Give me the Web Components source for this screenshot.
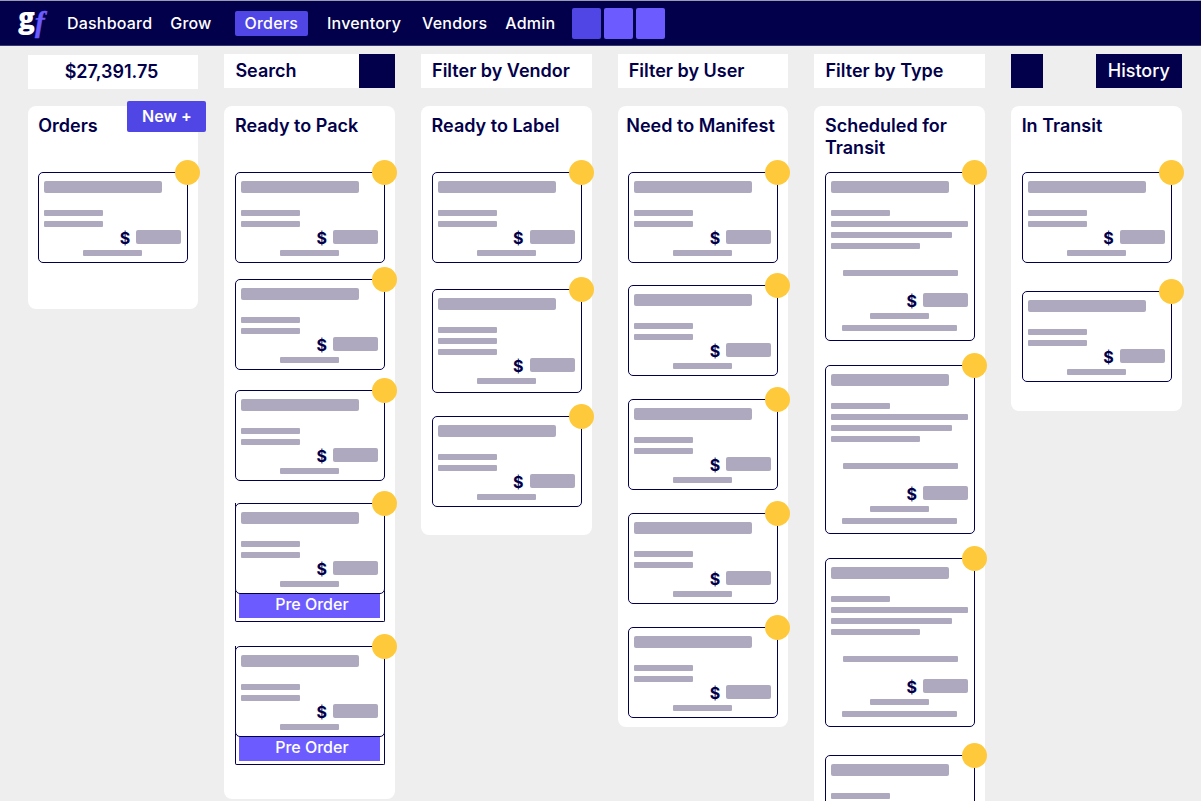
<!DOCTYPE html>
<html>
<head>
<meta charset="utf-8">
<title>Orders</title>
<style>
    html, body {
        margin: 0;
        height: 801px;
        overflow: hidden;
        background: #eeeeee;
        font-family: Inter, 'Liberation Sans', sans-serif;
        color: #02004a;
    }
    .filters, .board {
        display: grid;
        grid-template-columns: repeat(6, 170.7px);
        column-gap: 26px;
        padding-left: 27.7px;
    }
    .filters { margin-top: 8px; height: 34px; }
    .board { margin-top: 18px; align-items: start; }
</style>
</head>
<body>
<app-nav>
    <nav-link>Dashboard</nav-link>
    <nav-link>Grow</nav-link>
    <nav-link active style="margin-left: 5px">Orders</nav-link>
    <nav-link style="margin-left: 1px">Inventory</nav-link>
    <nav-link style="margin-left: 3px">Vendors</nav-link>
    <nav-link>Admin</nav-link>
</app-nav>

<div class="filters">
    <filter-box center style="margin-top: 1px">$27,391.75</filter-box>
    <filter-box square>Search</filter-box>
    <filter-box>Filter by Vendor</filter-box>
    <filter-box>Filter by User</filter-box>
    <filter-box>Filter by Type</filter-box>
    <history-bar>History</history-bar>
</div>

<div class="board">
    <kanban-column heading="Orders" pad="46">
        <new-button slot="action">New +</new-button>
        <order-card></order-card>
    </kanban-column>

    <kanban-column heading="Ready to Pack" pad="34">
        <order-card></order-card>
        <order-card style="margin-top: 16px"></order-card>
        <order-card style="margin-top: 20px"></order-card>
        <order-card style="margin-top: 22px" preorder></order-card>
        <order-card style="margin-top: 24px" preorder></order-card>
    </kanban-column>

    <kanban-column heading="Ready to Label" pad="28">
        <order-card></order-card>
        <order-card style="margin-top: 26px" lines="59,59,59"></order-card>
        <order-card style="margin-top: 23px"></order-card>
    </kanban-column>

    <kanban-column heading="Need to Manifest" pad="9" tight>
        <order-card></order-card>
        <order-card style="margin-top: 22px"></order-card>
        <order-card style="margin-top: 23px"></order-card>
        <order-card style="margin-top: 23px"></order-card>
        <order-card style="margin-top: 23px"></order-card>
    </kanban-column>

    <kanban-column heading="Scheduled for Transit" pad="34">
        <order-card tall></order-card>
        <order-card tall style="margin-top: 24px"></order-card>
        <order-card tall style="margin-top: 24px"></order-card>
        <order-card tall cut style="margin-top: 28px"></order-card>
    </kanban-column>

    <kanban-column heading="In Transit" pad="29">
        <order-card></order-card>
        <order-card style="margin-top: 28px"></order-card>
    </kanban-column>
</div>

<script>
class AppNav extends HTMLElement {
    constructor() {
        super();
        this.attachShadow({ mode: 'open' });
        this.shadowRoot.innerHTML = `
            <style>
                :host {
                    display: flex;
                    align-items: center;
                    box-sizing: border-box;
                    height: 46px;
                    padding-left: 18px;
                    background: #02004a;
                    border-top: 1px solid #9a9ab0;
                    border-bottom: 1px solid #3a3870;
                }
                .logo {
                    display: flex;
                    align-items: flex-start;
                    width: 49px;
                    height: 34px;
                    font-size: 28px;
                    line-height: 30px;
                    font-family: 'Open Sans', sans-serif;
                    font-weight: 800;
                    color: #fff;
                }
                .logo span { margin-top: -4px; }
                .logo i {
                    margin-top: 1px;
                    color: #6c5cff;
                    font-family: 'Liberation Serif', serif;
                    font-size: 29px;
                    font-weight: 700;
                    -webkit-text-stroke: 0.5px #6c5cff;
                }
                .links { display: flex; align-items: center; gap: 18px; }
                .squares { display: flex; gap: 3px; margin-left: 17px; }
                .squares span {
                    width: 29px;
                    height: 31px;
                    border-radius: 2px;
                    background: #6c5cff;
                }
                .squares span:first-child { background: #4f46e5; }
            </style>
            <div class="logo"><span>g</span><i>f</i></div>
            <div class="links"><slot></slot></div>
            <div class="squares"><span></span><span></span><span></span></div>
        `;
    }
}

class NavLink extends HTMLElement {
    constructor() {
        super();
        this.attachShadow({ mode: 'open' });
        this.shadowRoot.innerHTML = `
            <style>
                :host {
                    display: block;
                    color: #fff;
                    font-size: 16px;
                    font-weight: 500;
                    letter-spacing: 0.2px;
                    line-height: 25px;
                }
                :host([active]) {
                    padding: 0 10px;
                    border-radius: 2px;
                    background: #4f46e5;
                }
            </style>
            <slot></slot>
        `;
    }
}

class FilterBox extends HTMLElement {
    constructor() {
        super();
        this.attachShadow({ mode: 'open' });
        this.shadowRoot.innerHTML = `
            <style>
                :host {
                    display: flex;
                    height: 34px;
                    background: #fff;
                    font-size: 18px;
                    font-weight: 600;
                    line-height: 34px;
                }
                .text { flex: 1; padding-left: 11px; }
                :host([center]) .text { padding: 0 3px 0 0; text-align: center; }
                .square { display: none; width: 36px; background: #02004a; }
                :host([square]) .square { display: block; }
            </style>
            <div class="text"><slot></slot></div>
            <div class="square"></div>
        `;
    }
}

class HistoryBar extends HTMLElement {
    constructor() {
        super();
        this.attachShadow({ mode: 'open' });
        this.shadowRoot.innerHTML = `
            <style>
                :host {
                    display: flex;
                    justify-content: space-between;
                    height: 34px;
                    font-size: 18px;
                    font-weight: 500;
                    line-height: 34px;
                    color: #fff;
                }
                .square { width: 32px; background: #02004a; }
                .history { width: 86px; background: #02004a; text-align: center; }
            </style>
            <div class="square"></div>
            <div class="history"><slot></slot></div>
        `;
    }
}

class NewButton extends HTMLElement {
    constructor() {
        super();
        this.attachShadow({ mode: 'open' });
        this.shadowRoot.innerHTML = `
            <style>
                :host {
                    position: absolute;
                    top: -5px;
                    right: -8px;
                    width: 79px;
                    height: 31px;
                    border-radius: 2px;
                    background: #4f46e5;
                    color: #fff;
                    font-size: 16px;
                    font-weight: 600;
                    line-height: 30px;
                    text-align: center;
                }
            </style>
            <slot></slot>
        `;
    }
}

class KanbanColumn extends HTMLElement {
    constructor() {
        super();
        this.attachShadow({ mode: 'open' });
        this.shadowRoot.innerHTML = `
            <style>
                :host {
                    display: block;
                    position: relative;
                    box-sizing: border-box;
                    padding: 0 10px 0 10.5px;
                    border-radius: 8px;
                    background: #fff;
                }
                h2 {
                    box-sizing: border-box;
                    height: 66px;
                    margin: 0;
                    padding-top: 9.4px;
                    font-size: 18px;
                    font-weight: 600;
                    line-height: 22px;
                }
                :host([tight]) h2 { margin-left: -2px; }
                .cards { display: flex; flex-direction: column; }
            </style>
            <slot name="action"></slot>
            <h2></h2>
            <div class="cards"><slot></slot></div>
        `;
    }

    connectedCallback() {
        this.shadowRoot.querySelector('h2').textContent = this.getAttribute('heading');
        this.style.paddingBottom = this.getAttribute('pad') + 'px';
    }
}

class OrderCard extends HTMLElement {
    constructor() {
        super();
        this.attachShadow({ mode: 'open' });
    }

    connectedCallback() {
        const tall = this.hasAttribute('tall');
        const widths = tall ? [59, 137, 121, 89] : (this.getAttribute('lines') || '59,59').split(',');
        const details = widths.map(w => `<div class="bar" style="width: ${w}px"></div>`).join('');

        this.shadowRoot.innerHTML = `
            <style>
                :host {
                    display: block;
                    position: relative;
                    box-sizing: border-box;
                    width: 150px;
                }
                :host([preorder]) {
                    border: 1px solid #02004a;
                    border-top: 0;
                    border-radius: 0 0 2px 2px;
                }
                .card {
                    position: relative;
                    box-sizing: border-box;
                    height: ${tall ? 169 : (widths.length > 2 ? 104 : 91)}px;
                    padding: 8px 5px 0;
                    border: 1px solid #02004a;
                    border-radius: 5px;
                    background: #fff;
                }
                :host([preorder]) .card { margin: 0 -1px; }
                .bar { height: 5.5px; border-radius: 1px; background: #aea9bf; }
                .title { width: 118px; height: 11.5px; border-radius: 2px; margin-bottom: 17.5px; }
                .details { display: flex; flex-direction: column; gap: 5.5px; }
                .middle { width: 115px; margin: 21.5px 0 0 12px; }
                .price {
                    display: flex;
                    justify-content: flex-end;
                    align-items: center;
                    gap: 6px;
                    height: 14px;
                    margin-top: ${tall ? 17.5 : 3.5}px;
                    margin-right: 1px;
                    font-family: Inter, sans-serif;
                    font-size: 16px;
                    font-weight: 700;
                }
                .price span { margin-top: 2px; }
                .amount { width: 45px; height: 14px; border-radius: 2px; background: #aea9bf; }
                .center { width: 59px; margin: 6px 0 0 39px; }
                .wide { width: 115px; margin: 6.5px 0 0 11px; }
                :host([cut]) .price, :host([cut]) .center, :host([cut]) .wide { display: none; }
                .dot {
                    position: absolute;
                    top: -13px;
                    right: -13px;
                    width: 25px;
                    height: 25px;
                    border-radius: 50%;
                    background: #ffc93c;
                }
                .pre {
                    display: none;
                    height: 24px;
                    margin: 0 4px 3px 3px;
                    padding-left: 5px;
                    background: #6c5cff;
                    color: #fff;
                    font-size: 16px;
                    font-weight: 500;
                    line-height: 21px;
                    text-align: center;
                }
                :host([preorder]) .pre { display: block; }
            </style>
            <div class="card">
                <div class="bar title"></div>
                <div class="details">${details}</div>
                ${tall ? '<div class="bar middle"></div>' : ''}
                <div class="price"><span>$</span><div class="amount"></div></div>
                <div class="bar center"></div>
                ${tall ? '<div class="bar wide"></div>' : ''}
                <div class="dot"></div>
            </div>
            <div class="pre">Pre Order</div>
        `;
    }
}

customElements.define('app-nav', AppNav);
customElements.define('nav-link', NavLink);
customElements.define('filter-box', FilterBox);
customElements.define('history-bar', HistoryBar);
customElements.define('new-button', NewButton);
customElements.define('kanban-column', KanbanColumn);
customElements.define('order-card', OrderCard);
</script>
</body>
</html>
